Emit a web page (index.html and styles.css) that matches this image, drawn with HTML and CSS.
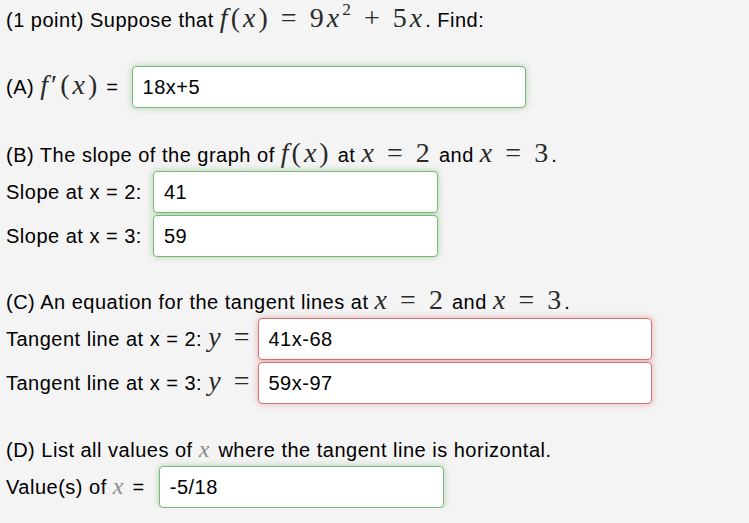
FILE: index.html
```html
<!DOCTYPE html>
<html>

<head>
    <title>Problem 1</title>
    <link rel="stylesheet" href="styles.css">
</head>

<body>

    <div class="problem">

        <p class="line title">(1 point) Suppose that
            <span class="math"><i>f</i>(<i>x</i>)<span class="op">=</span>9<i>x</i><sup>2</sup><span class="op">+</span>5<i>x</i></span>. Find:
        </p>

        <!-- Part A -->
        <div class="row row-a">
            <span class="label">(A) <span class="math"><i>f</i>′(<i>x</i>)</span> = </span>
            <input class="answer correct wide" type="text" value="18x+5">
        </div>

        <!-- Part B -->
        <p class="line heading-b">(B) The slope of the graph of
            <span class="math"><i>f</i>(<i>x</i>)</span> at
            <span class="math"><i>x</i><span class="op">=</span>2</span> and
            <span class="math"><i>x</i><span class="op">=</span>3</span>.
        </p>
        <div class="row first">
            <span class="label">Slope at x = 2: </span>
            <input class="answer correct narrow" type="text" value="41">
        </div>
        <div class="row">
            <span class="label">Slope at x = 3: </span>
            <input class="answer correct narrow" type="text" value="59">
        </div>

        <!-- Part C -->
        <p class="line heading-c">(C) An equation for the tangent lines at
            <span class="math"><i>x</i><span class="op">=</span>2</span> and
            <span class="math"><i>x</i><span class="op">=</span>3</span>.
        </p>
        <div class="row first">
            <span class="label">Tangent line at x = 2: <span class="math"><i>y</i><span class="op eq-end">=</span></span></span>
            <input class="answer wrong wide" type="text" value="41x-68">
        </div>
        <div class="row">
            <span class="label">Tangent line at x = 3: <span class="math"><i>y</i><span class="op eq-end">=</span></span></span>
            <input class="answer wrong wide" type="text" value="59x-97">
        </div>

        <!-- Part D -->
        <p class="line heading-d">(D) List all values of <span class="math faint"><i>x</i></span> where the tangent line is horizontal.</p>
        <div class="row first">
            <span class="label">Value(s) of <span class="math faint"><i>x</i></span> = </span>
            <input class="answer correct narrow shift" type="text" value="-5/18">
        </div>

    </div>

</body>

</html>
```

FILE: styles.css
```css
body { /* Page background and base text */
    margin: 0;
    background-color: #f4f4f4;
    font-family: "Liberation Sans", Arial, sans-serif;
    font-size: 20px;
    letter-spacing: 0.5px;
    color: #000;
}

.problem { /* Problem body */
    padding-left: 6px;
}

.line { /* Single text line */
    margin: 0;
    height: 24px;
    line-height: 24px;
    white-space: nowrap;
}

.title {
    margin-top: 8px;
}

.heading-b {
    margin-top: 35px;
}

.heading-c {
    margin-top: 33px;
}

.heading-d {
    margin-top: 34px;
}

.row { /* Label + answer box */
    display: flex;
    align-items: center;
    height: 42px;
    margin-top: 2px;
    line-height: 24px;
    white-space: pre;
}

.row-a {
    margin-top: 34px;
}

.row.first {
    margin-top: 4px;
}

.math { /* TeX-looking formulas */
    font-family: "Liberation Serif", "Times New Roman", serif;
    font-size: 28px;
    letter-spacing: 3px;
    color: #2a2a2a;
    line-height: 20px;
}

.math i {
    font-style: italic;
}

.math sup {
    font-size: 0.62em;
    line-height: 0;
    vertical-align: 0.7em;
}

.math .op {
    margin: 0 0.36em;
}

.math .op.eq-end {
    margin-right: 0;
}

.math.faint {
    color: #8a8a8a;
    font-size: 24px;
}

.answer { /* Answer input */
    box-sizing: border-box;
    height: 42px;
    margin-left: 5px;
    padding: 0 10px;
    border-radius: 4px;
    background-color: #fff;
    font-family: "Liberation Sans", Arial, sans-serif;
    font-size: 20px;
    letter-spacing: 0.5px;
    color: #000;
    outline: none;
}

.row-a .answer {
    margin-left: 7px;
}

.answer.shift {
    margin-left: 8px;
}

.answer.wide {
    width: 394px;
}

.answer.narrow {
    width: 285px;
}

.answer.correct {
    border: 1px solid #78b878;
    box-shadow: 0 0 7px rgba(90, 170, 90, 0.45);
}

.answer.wrong {
    border: 1px solid #d47474;
    box-shadow: 0 0 7px rgba(215, 90, 90, 0.45);
}
```
